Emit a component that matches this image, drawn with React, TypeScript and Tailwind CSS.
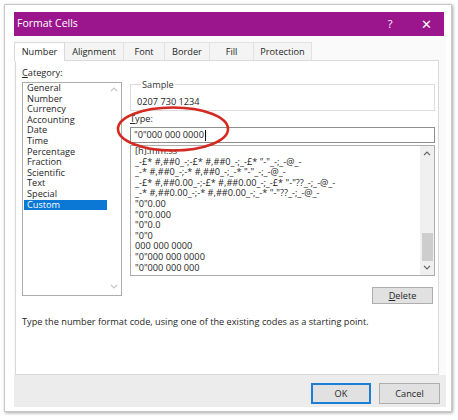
const FONT = { fontFamily: '"Open Sans", "Noto Sans", sans-serif' }

const categories = ['General', 'Number', 'Currency', 'Accounting', 'Date', 'Time', 'Percentage', 'Fraction', 'Scientific', 'Text', 'Special', 'Custom']

const formats = [
  '[h]:mm:ss',
  '_-£* #,##0_-;-£* #,##0_-;_-£* "-"_-;_-@_-',
  '_-* #,##0_-;-* #,##0_-;_-* "-"_-;_-@_-',
  '_-£* #,##0.00_-;-£* #,##0.00_-;_-£* "-"??_-;_-@_-',
  '_-* #,##0.00_-;-* #,##0.00_-;_-* "-"??_-;_-@_-',
  '"0"0.00',
  '"0"0.000',
  '"0"0.0',
  '"0"0',
  '000 000 0000',
  '"0"000 000 0000',
  '"0"000 000 000',
]

const tabs = [
  { name: 'Number', w: 'w-[51px]' },
  { name: 'Alignment', w: 'w-[59px]' },
  { name: 'Font', w: 'w-[41px]' },
  { name: 'Border', w: 'w-[45px]' },
  { name: 'Fill', w: 'w-[44px]' },
  { name: 'Protection', w: 'w-[58px]' },
]

function Chevron({ up, color = '#9a9a9a' }: { up?: boolean; color?: string }) {
  return (
    <svg width="8" height="5" viewBox="0 0 8 5">
      <polyline
        points={up ? '1,4.2 4,1.2 7,4.2' : '1,0.8 4,3.8 7,0.8'}
        fill="none"
        stroke={color}
        strokeWidth="1.2"
      />
    </svg>
  )
}

export default function App() {
  return (
    <div className="relative w-[458px] h-[420px] bg-white overflow-hidden text-[#262626]" style={FONT}>
      <div className="ml-[4px] mt-[4px] w-[448px] h-[408px] border border-[#c9c9c9] bg-white shadow-[1px_1px_3px_rgba(0,0,0,0.35)] pl-[9px] pt-[7px]">
        <div className="w-[432px] h-[395px] flex flex-col bg-[#fafafa]">
          {/* Title bar */}
          <div className="h-[24px] w-[430px] bg-[#9b168c] flex items-center text-white">
            <span className="ml-[3px] text-[10.5px]">Format Cells</span>
            <span className="ml-auto text-[11px] w-[10px] text-center">?</span>
            <span className="ml-[26px] mr-[12px] text-[13px] leading-none">✕</span>
          </div>

          {/* Tabs */}
          <div className="mt-[6px] flex h-[18px] text-[9.2px]">
            {tabs.map((t, i) => (
              <div
                key={t.name}
                className={`${t.w} flex items-center justify-center border border-b-0 ${
                  i === 0 ? 'bg-white border-[#d9d9d9] relative z-10 h-[19px]' : 'bg-[#f4f4f4] border-[#e2e2e2] border-l-0'
                }`}
              >
                {t.name}
              </div>
            ))}
          </div>

          {/* Panel */}
          <div className="ml-[1px] w-[424px] h-[315px] bg-white border border-[#d9d9d9] pl-[6px] pr-[3px] pt-[6px] text-[9.2px]">
            <div className="flex gap-[8px]">
              {/* Category */}
              <div className="w-[100px] flex flex-col">
                <div className="leading-[12px]">
                  <span className="underline">C</span>ategory:
                </div>
                <div className="mt-[3px] h-[214px] border border-[#adadad] flex">
                  <div className="flex-1 pl-[1px] leading-[10.6px]">
                    {categories.map((c) => (
                      <div key={c} className={`pl-[3px] ${c === 'Custom' ? 'bg-[#0a78d4] text-white' : ''}`}>
                        {c}
                      </div>
                    ))}
                  </div>
                  <div className="w-[14px] flex flex-col items-center justify-between pt-[4px] pb-[6px]">
                    <Chevron up color="#c4c4c4" />
                    <Chevron color="#c4c4c4" />
                  </div>
                </div>
              </div>

              {/* Right column */}
              <div className="w-[305px] flex flex-col">
                <fieldset className="mt-[12px] border border-[#dcdcdc] pl-[6px] pt-[6px] pb-[3px] leading-[11px]">
                  <legend className="ml-[4px] px-[1px] text-[#333]">Sample</legend>
                  0207 730 1234
                </fieldset>
                <div className="mt-[2px] leading-[11px]">
                  <span className="underline">T</span>ype:
                </div>
                <div className="mt-[3px] h-[16px] border border-[#8e8e8e] flex items-center pl-[3px]">
                  "0"000 000 0000
                  <span className="ml-[1px] w-px h-[11px] bg-black" />
                </div>
                <div className="mt-[2px] h-[131px] border border-[#adadad] flex">
                  <div className="flex-1 min-w-0 overflow-hidden pl-[4px] leading-[10.6px] whitespace-nowrap">
                    {formats.map((f, i) => (
                      <div key={i}>{f}</div>
                    ))}
                  </div>
                  <div className="w-[14px] bg-[#f0f0f0] flex flex-col items-center pt-[5px] pb-[5px]">
                    <Chevron up color="#606060" />
                    <div className="mt-auto mb-[4px] w-[11px] h-[28px] bg-[#cdcdcd]" />
                    <Chevron color="#606060" />
                  </div>
                </div>
                <button className="self-end mr-[2px] mt-[11px] w-[61px] h-[17px] bg-[#e1e1e1] border border-[#adadad] text-[9.2px] leading-none">
                  <span className="underline">D</span>elete
                </button>
              </div>
            </div>
            <p className="mt-[12px] leading-[11px]">Type the number format code, using one of the existing codes as a starting point.</p>
          </div>

          {/* Footer */}
          <div className="flex-1 bg-[#ececec] flex justify-end gap-[8px] pt-[8px] pr-[6px] text-[9.2px]">
            <button className="w-[60px] h-[21px] bg-[#e1e1e1] border-2 border-[#1a7fd4]">OK</button>
            <button className="w-[61px] h-[21px] bg-[#e1e1e1] border border-[#adadad]">Cancel</button>
          </div>
        </div>
      </div>

      {/* Red annotation ellipse */}
      <svg className="absolute left-[115px] top-[104px]" width="116" height="50" viewBox="0 0 116 50">
        <ellipse cx="58" cy="25" rx="55" ry="21.5" fill="none" stroke="#d42a22" strokeWidth="2.6" />
      </svg>
    </div>
  )
}
